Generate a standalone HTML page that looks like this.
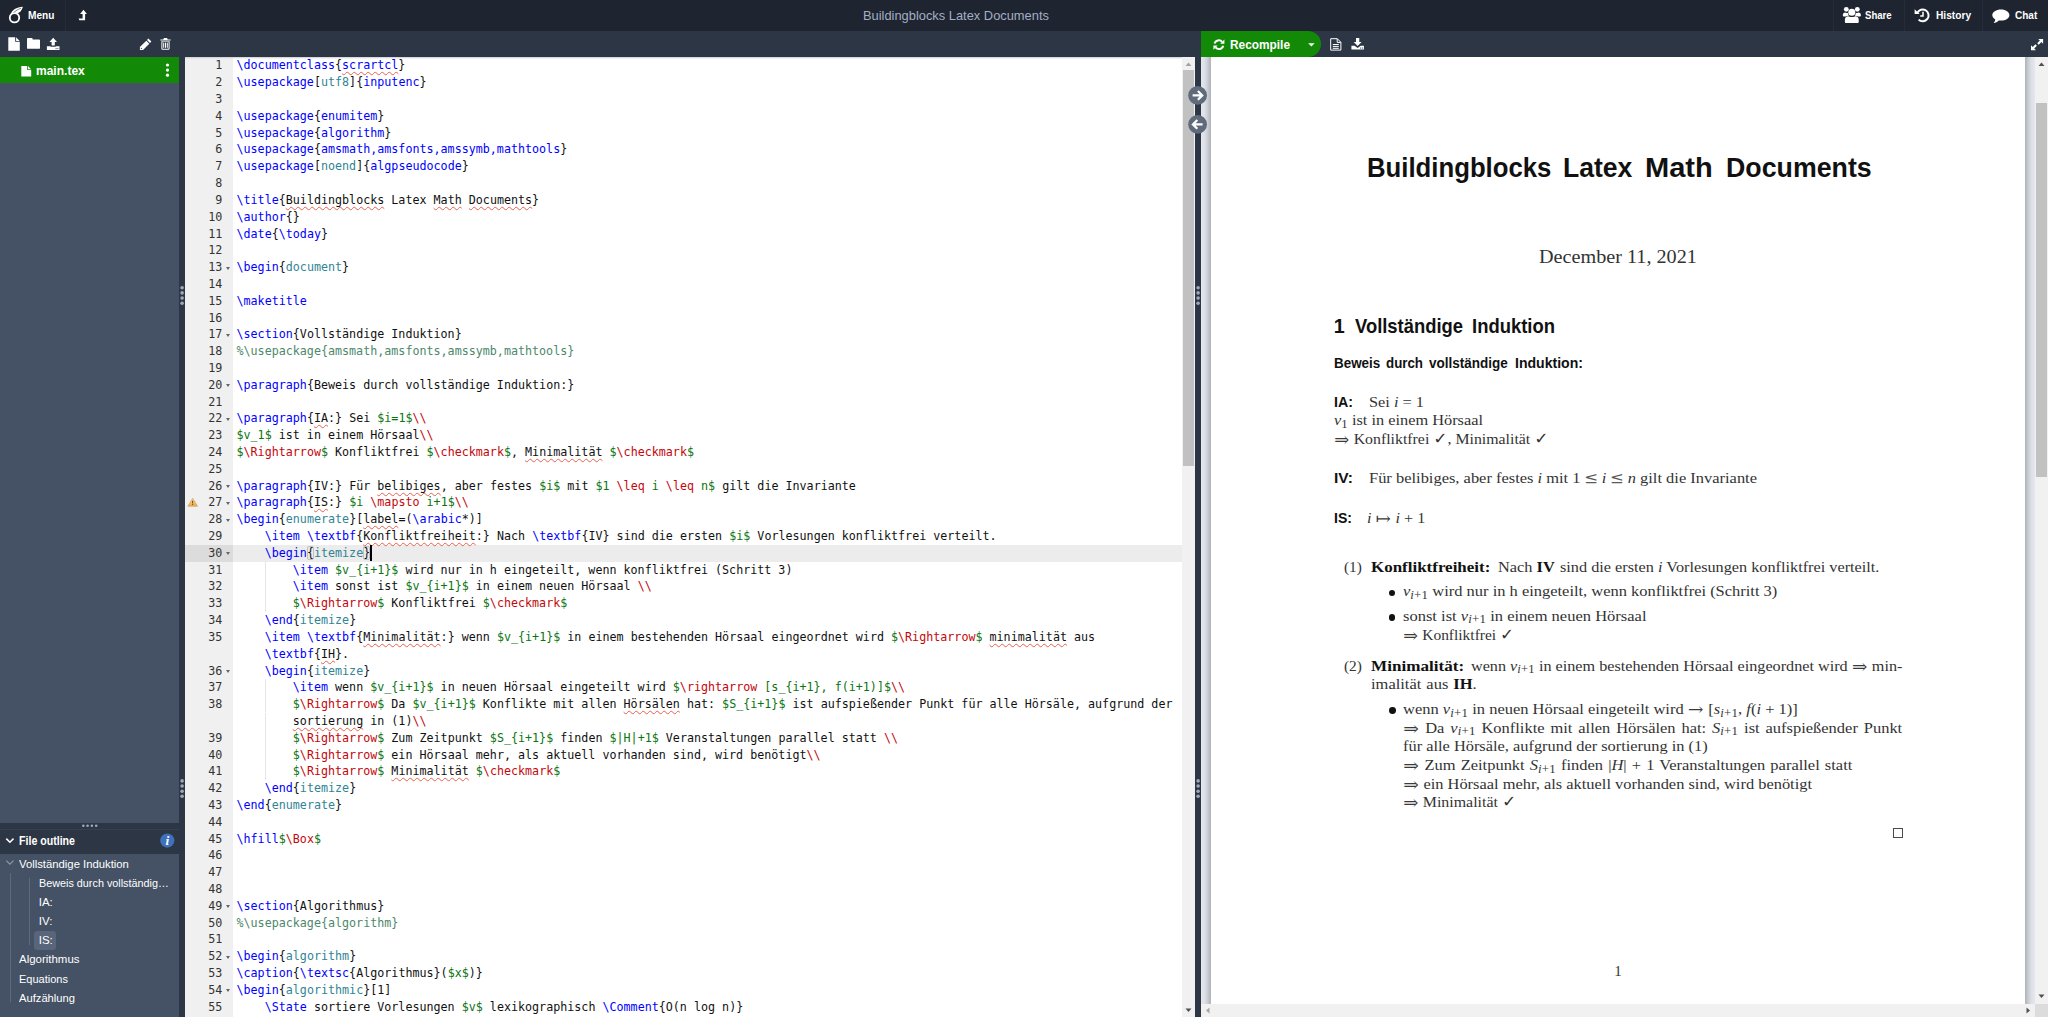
<!DOCTYPE html>
<html lang="de"><head><meta charset="utf-8"><title>Buildingblocks Latex Documents</title>
<style>
*{box-sizing:border-box;margin:0;padding:0}
html,body{width:2048px;height:1017px;overflow:hidden;background:#fff}
body{position:relative;font-family:"Liberation Sans",sans-serif;color:#fff;-webkit-font-smoothing:antialiased}
.abs{position:absolute}
#topbar{left:0;top:0;width:2048px;height:31px;background:#1e2530}
#tb2{left:0;top:31px;width:2048px;height:26px;background:#2c3645}
#side{left:0;top:57px;width:179px;height:960px;background:#455265}
#vsplit1{left:179px;top:57px;width:6px;height:960px;background:#2c3645}
#vsplit2{left:1195px;top:57px;width:6px;height:960px;background:#2c3645}
#filerow{left:0;top:57px;width:179px;height:26px;background:#138a07}
.tl{position:absolute;white-space:nowrap;line-height:20px;height:20px;transform-origin:0 0}
.tl span{line-height:0}
.div1{position:absolute;top:0;width:1px;height:31px;background:#262d3a}
/* editor */
#editor{left:185px;top:57px;width:997px;height:960px;background:#fff;overflow:hidden}
#gutter{left:0;top:0;width:48px;height:960px;background:#f0f0f0}
.ln{position:absolute;left:0;width:37.4px;text-align:right;color:#333;height:16.8px;line-height:16.8px}
#editor,.cl{font-family:"DejaVu Sans Mono","Liberation Mono",monospace;font-size:11.69px}
.cl{position:absolute;left:51.5px;white-space:pre;height:16.8px;line-height:16.8px;color:#111}
.k{color:#0000ff}.p{color:#111}.v{color:#318495}.c{color:#4c886b}.s{color:#0a7410}.e{color:#c5060b}.t{color:#111}
.sp,.ksp{text-decoration:underline wavy #e8604c;text-decoration-thickness:0.6px;text-underline-offset:1.6px;text-decoration-skip-ink:none}
.ksp{color:#0000ff}
.pb{outline:1px solid #c0c0c0;outline-offset:-1px;border-radius:2px}
.fold{position:absolute;left:40.7px;width:0;height:0;border-left:2.7px solid transparent;border-right:2.7px solid transparent;border-top:3.1px solid #666}
.ig{position:absolute;width:1px;background:#e6e6e6}
/* scrollbars */
.sbtrack{background:#f1f1f1}
.sbthumb{background:#c1c1c1}
/* pdf */
#pdfbg{left:1201px;top:57px;width:834px;height:947px;background:#e4e8ee}
#page{left:1211px;top:57px;width:814px;height:947px;background:#fff}
.pl{position:absolute;white-space:nowrap;transform-origin:0 0;color:#333;font-family:"Liberation Serif",serif;font-size:14.97px;line-height:24px;height:24px}
.pl span{line-height:0}
.sf{font-family:"Liberation Sans",sans-serif;font-weight:bold;color:#111}
.b{font-weight:bold;color:#111}
.i{font-style:italic}
.sub{font-size:0.78em;position:relative;top:0.2em;letter-spacing:0.2px}
.m{font-family:"DejaVu Math TeX Gyre","DejaVu Sans",sans-serif;color:#3a3a3a}
.le{color:#5a5a5a}
.ck{font-family:"DejaVu Sans","DejaVu Math TeX Gyre",sans-serif;font-size:1.08em;color:#333}
</style></head><body>
<div id="topbar" class="abs"></div>
<div id="tb2" class="abs"></div>
<div id="side" class="abs"></div>
<div id="filerow" class="abs"></div>
<div id="vsplit1" class="abs"></div>
<div id="editor" class="abs">
<div id="gutter" class="abs"></div>
<div class="abs" style="left:0;top:488.1px;width:48px;height:16.808px;background:#dcdcdc"></div>
<div class="abs" style="left:48px;top:488.1px;width:949px;height:16.808px;background:#ececec"></div>
<div class="abs" style="left:0;top:0;width:997px;height:2px;background:linear-gradient(#c9cdd4,rgba(201,205,212,0))"></div>
<div class="ln" style="top:0.4px">1</div>
<div class="cl" style="top:0.4px"><span class="k">\documentclass</span><span class="p">{</span><span class="ksp">scrartcl</span><span class="p">}</span></div>
<div class="ln" style="top:17.2px">2</div>
<div class="cl" style="top:17.2px"><span class="k">\usepackage</span><span class="p">[</span><span class="v">utf8</span><span class="p">]</span><span class="p">{</span><span class="k">inputenc</span><span class="p">}</span></div>
<div class="ln" style="top:34.0px">3</div>
<div class="ln" style="top:50.8px">4</div>
<div class="cl" style="top:50.8px"><span class="k">\usepackage</span><span class="p">{</span><span class="k">enumitem</span><span class="p">}</span></div>
<div class="ln" style="top:67.6px">5</div>
<div class="cl" style="top:67.6px"><span class="k">\usepackage</span><span class="p">{</span><span class="k">algorithm</span><span class="p">}</span></div>
<div class="ln" style="top:84.4px">6</div>
<div class="cl" style="top:84.4px"><span class="k">\usepackage</span><span class="p">{</span><span class="k">amsmath,amsfonts,amssymb,mathtools</span><span class="p">}</span></div>
<div class="ln" style="top:101.2px">7</div>
<div class="cl" style="top:101.2px"><span class="k">\usepackage</span><span class="p">[</span><span class="v">noend</span><span class="p">]</span><span class="p">{</span><span class="k">algpseudocode</span><span class="p">}</span></div>
<div class="ln" style="top:118.1px">8</div>
<div class="ln" style="top:134.9px">9</div>
<div class="cl" style="top:134.9px"><span class="k">\title</span><span class="p">{</span><span class="sp">Buildingblocks</span> Latex <span class="sp">Math</span> <span class="sp">Documents</span><span class="p">}</span></div>
<div class="ln" style="top:151.7px">10</div>
<div class="cl" style="top:151.7px"><span class="k">\author</span><span class="p">{}</span></div>
<div class="ln" style="top:168.5px">11</div>
<div class="cl" style="top:168.5px"><span class="k">\date</span><span class="p">{</span><span class="k">\today</span><span class="p">}</span></div>
<div class="ln" style="top:185.3px">12</div>
<div class="ln" style="top:202.1px">13</div>
<div class="fold" style="top:209.6px"></div>
<div class="cl" style="top:202.1px"><span class="k">\begin</span><span class="p">{</span><span class="v">document</span><span class="p">}</span></div>
<div class="ln" style="top:218.9px">14</div>
<div class="ln" style="top:235.7px">15</div>
<div class="cl" style="top:235.7px"><span class="k">\maketitle</span></div>
<div class="ln" style="top:252.5px">16</div>
<div class="ln" style="top:269.3px">17</div>
<div class="fold" style="top:276.8px"></div>
<div class="cl" style="top:269.3px"><span class="k">\section</span><span class="p">{</span>Vollständige Induktion<span class="p">}</span></div>
<div class="ln" style="top:286.1px">18</div>
<div class="cl" style="top:286.1px"><span class="c">%\usepackage{amsmath,amsfonts,amssymb,mathtools}</span></div>
<div class="ln" style="top:302.9px">19</div>
<div class="ln" style="top:319.8px">20</div>
<div class="fold" style="top:327.3px"></div>
<div class="cl" style="top:319.8px"><span class="k">\paragraph</span><span class="p">{</span>Beweis durch vollständige Induktion:<span class="p">}</span></div>
<div class="ln" style="top:336.6px">21</div>
<div class="ln" style="top:353.4px">22</div>
<div class="fold" style="top:360.9px"></div>
<div class="cl" style="top:353.4px"><span class="k">\paragraph</span><span class="p">{</span><span class="sp">IA</span>:<span class="p">}</span> Sei <span class="s">$i=1$</span><span class="e">\\</span></div>
<div class="ln" style="top:370.2px">23</div>
<div class="cl" style="top:370.2px"><span class="s">$v_1$</span> ist in einem Hörsaal<span class="e">\\</span></div>
<div class="ln" style="top:387.0px">24</div>
<div class="cl" style="top:387.0px"><span class="s">$</span><span class="e">\Rightarrow</span><span class="s">$</span> Konfliktfrei <span class="s">$</span><span class="e">\checkmark</span><span class="s">$</span>, <span class="sp">Minimalität</span> <span class="s">$</span><span class="e">\checkmark</span><span class="s">$</span></div>
<div class="ln" style="top:403.8px">25</div>
<div class="ln" style="top:420.6px">26</div>
<div class="fold" style="top:428.1px"></div>
<div class="cl" style="top:420.6px"><span class="k">\paragraph</span><span class="p">{</span>IV:<span class="p">}</span> Für <span class="sp">belibiges</span>, aber festes <span class="s">$i$</span> mit <span class="s">$1 </span><span class="e">\leq</span><span class="s"> i </span><span class="e">\leq</span><span class="s"> n$</span> gilt die Invariante</div>
<div class="ln" style="top:437.4px">27</div>
<div class="fold" style="top:444.9px"></div>
<div class="cl" style="top:437.4px"><span class="k">\paragraph</span><span class="p">{</span><span class="sp">IS</span>:<span class="p">}</span> <span class="s">$i </span><span class="e">\mapsto</span><span class="s"> i+1$</span><span class="e">\\</span></div>
<div class="ln" style="top:454.2px">28</div>
<div class="fold" style="top:461.7px"></div>
<div class="cl" style="top:454.2px"><span class="k">\begin</span><span class="p">{</span><span class="v">enumerate</span><span class="p">}</span><span class="p">[</span><span class="sp">label</span>=(<span class="k">\arabic</span>*)<span class="p">]</span></div>
<div class="ln" style="top:471.0px">29</div>
<div class="cl" style="top:471.0px">    <span class="k">\item</span> <span class="k">\textbf</span><span class="p">{</span><span class="sp">Konfliktfreiheit</span>:<span class="p">}</span> Nach <span class="k">\textbf</span><span class="p">{</span>IV<span class="p">}</span> sind die ersten <span class="s">$i$</span> Vorlesungen konfliktfrei verteilt.</div>
<div class="ln" style="top:487.8px">30</div>
<div class="fold" style="top:495.3px"></div>
<div class="cl" style="top:487.8px">    <span class="k">\begin</span><span class="pb">{</span><span class="v">itemize</span><span class="pb">}</span></div>
<div class="ig" style="left:79.5px;top:504.2px;height:16.808px"></div>
<div class="ln" style="top:504.6px">31</div>
<div class="cl" style="top:504.6px">        <span class="k">\item</span> <span class="s">$v_{i+1}$</span> wird nur in h eingeteilt, wenn konfliktfrei (Schritt 3)</div>
<div class="ig" style="left:79.5px;top:521.0px;height:16.808px"></div>
<div class="ln" style="top:521.4px">32</div>
<div class="cl" style="top:521.4px">        <span class="k">\item</span> sonst ist <span class="s">$v_{i+1}$</span> in einem neuen Hörsaal <span class="e">\\</span></div>
<div class="ig" style="left:79.5px;top:537.9px;height:16.808px"></div>
<div class="ln" style="top:538.3px">33</div>
<div class="cl" style="top:538.3px">        <span class="s">$</span><span class="e">\Rightarrow</span><span class="s">$</span> Konfliktfrei <span class="s">$</span><span class="e">\checkmark</span><span class="s">$</span></div>
<div class="ln" style="top:555.1px">34</div>
<div class="cl" style="top:555.1px">    <span class="k">\end</span><span class="p">{</span><span class="v">itemize</span><span class="p">}</span></div>
<div class="ln" style="top:571.9px">35</div>
<div class="cl" style="top:571.9px">    <span class="k">\item</span> <span class="k">\textbf</span><span class="p">{</span><span class="sp">Minimalität</span>:<span class="p">}</span> wenn <span class="s">$v_{i+1}$</span> in einem bestehenden Hörsaal eingeordnet wird <span class="s">$</span><span class="e">\Rightarrow</span><span class="s">$</span> <span class="sp">minimalität</span> aus</div>
<div class="cl" style="top:588.7px">    <span class="k">\textbf</span><span class="p">{</span><span class="sp">IH</span><span class="p">}</span>.</div>
<div class="ln" style="top:605.5px">36</div>
<div class="fold" style="top:613.0px"></div>
<div class="cl" style="top:605.5px">    <span class="k">\begin</span><span class="p">{</span><span class="v">itemize</span><span class="p">}</span></div>
<div class="ig" style="left:79.5px;top:621.9px;height:16.808px"></div>
<div class="ln" style="top:622.3px">37</div>
<div class="cl" style="top:622.3px">        <span class="k">\item</span> wenn <span class="s">$v_{i+1}$</span> in neuen Hörsaal eingeteilt wird <span class="s">$</span><span class="e">\rightarrow</span><span class="s"> [s_{i+1}, f(i+1)]$</span><span class="e">\\</span></div>
<div class="ig" style="left:79.5px;top:638.7px;height:16.808px"></div>
<div class="ln" style="top:639.1px">38</div>
<div class="cl" style="top:639.1px">        <span class="s">$</span><span class="e">\Rightarrow</span><span class="s">$</span> Da <span class="s">$v_{i+1}$</span> Konflikte mit allen <span class="sp">Hörsälen</span> hat: <span class="s">$S_{i+1}$</span> ist aufspießender Punkt für alle Hörsäle, aufgrund der</div>
<div class="ig" style="left:79.5px;top:655.5px;height:16.808px"></div>
<div class="cl" style="top:655.9px">        <span class="sp">sortierung</span> in (1)<span class="e">\\</span></div>
<div class="ig" style="left:79.5px;top:672.3px;height:16.808px"></div>
<div class="ln" style="top:672.7px">39</div>
<div class="cl" style="top:672.7px">        <span class="s">$</span><span class="e">\Rightarrow</span><span class="s">$</span> Zum Zeitpunkt <span class="s">$S_{i+1}$</span> finden <span class="s">$|H|+1$</span> Veranstaltungen parallel statt <span class="e">\\</span></div>
<div class="ig" style="left:79.5px;top:689.1px;height:16.808px"></div>
<div class="ln" style="top:689.5px">40</div>
<div class="cl" style="top:689.5px">        <span class="s">$</span><span class="e">\Rightarrow</span><span class="s">$</span> ein Hörsaal mehr, als aktuell vorhanden sind, wird benötigt<span class="e">\\</span></div>
<div class="ig" style="left:79.5px;top:705.9px;height:16.808px"></div>
<div class="ln" style="top:706.3px">41</div>
<div class="cl" style="top:706.3px">        <span class="s">$</span><span class="e">\Rightarrow</span><span class="s">$</span> <span class="sp">Minimalität</span> <span class="s">$</span><span class="e">\checkmark</span><span class="s">$</span></div>
<div class="ln" style="top:723.1px">42</div>
<div class="cl" style="top:723.1px">    <span class="k">\end</span><span class="p">{</span><span class="v">itemize</span><span class="p">}</span></div>
<div class="ln" style="top:740.0px">43</div>
<div class="cl" style="top:740.0px"><span class="k">\end</span><span class="p">{</span><span class="v">enumerate</span><span class="p">}</span></div>
<div class="ln" style="top:756.8px">44</div>
<div class="ln" style="top:773.6px">45</div>
<div class="cl" style="top:773.6px"><span class="k">\hfill</span><span class="s">$</span><span class="e">\Box</span><span class="s">$</span></div>
<div class="ln" style="top:790.4px">46</div>
<div class="ln" style="top:807.2px">47</div>
<div class="ln" style="top:824.0px">48</div>
<div class="ln" style="top:840.8px">49</div>
<div class="fold" style="top:848.3px"></div>
<div class="cl" style="top:840.8px"><span class="k">\section</span><span class="p">{</span>Algorithmus<span class="p">}</span></div>
<div class="ln" style="top:857.6px">50</div>
<div class="cl" style="top:857.6px"><span class="c">%\usepackage{algorithm}</span></div>
<div class="ln" style="top:874.4px">51</div>
<div class="ln" style="top:891.2px">52</div>
<div class="fold" style="top:898.7px"></div>
<div class="cl" style="top:891.2px"><span class="k">\begin</span><span class="p">{</span><span class="v">algorithm</span><span class="p">}</span></div>
<div class="ln" style="top:908.0px">53</div>
<div class="cl" style="top:908.0px"><span class="k">\caption</span><span class="p">{</span><span class="k">\textsc</span><span class="p">{</span>Algorithmus<span class="p">}</span>(<span class="s">$x$</span>)<span class="p">}</span></div>
<div class="ln" style="top:924.8px">54</div>
<div class="fold" style="top:932.3px"></div>
<div class="cl" style="top:924.8px"><span class="k">\begin</span><span class="p">{</span><span class="v">algorithmic</span><span class="p">}</span><span class="p">[</span>1<span class="p">]</span></div>
<div class="ln" style="top:941.6px">55</div>
<div class="cl" style="top:941.6px">    <span class="k">\State</span> sortiere Vorlesungen <span class="s">$v$</span> lexikographisch <span class="k">\Comment</span><span class="p">{</span>O(n log n)<span class="p">}</span></div>
</div>
<div id="vsplit2" class="abs"></div>
<div id="pdfbg" class="abs"></div>
<div id="page" class="abs"></div>
<div class="div1" style="left:65px"></div>
<div class="div1" style="left:1833px"></div>
<div class="div1" style="left:1903.5px"></div>
<div class="div1" style="left:1982px"></div>
<div class="abs" style="left:1201px;top:31px;width:120px;height:26px;background:#138a07;border-radius:0 13px 13px 0"></div>
<div class="abs sbtrack" style="left:1182px;top:57px;width:13px;height:960px"></div>
<div class="abs sbthumb" style="left:1183px;top:70px;width:11px;height:396px"></div>
<div class="abs" style="left:1201px;top:57px;width:10px;height:947px;background:linear-gradient(90deg,#e4e8ee 0%,#dde1e7 35%,#cbcfd5 65%,#b4b8bf 90%,#b2b6bd 100%)"></div>
<div class="abs" style="left:2025px;top:57px;width:10px;height:947px;background:linear-gradient(90deg,#b2b6bd 0%,#b4b8bf 10%,#cbcfd5 35%,#dde1e7 65%,#e4e8ee 100%)"></div>
<div class="abs sbtrack" style="left:2035px;top:57px;width:13px;height:947px"></div>
<div class="abs sbthumb" style="left:2036px;top:103px;width:11px;height:374px"></div>
<div class="abs sbtrack" style="left:1201px;top:1004px;width:847px;height:13px"></div>
<div class="abs" style="left:2035px;top:1004px;width:13px;height:13px;background:#dcdcdc"></div>
<div class="abs" style="left:0;top:823px;width:179px;height:6px;background:#2c3645"></div>
<div class="abs" style="left:0;top:829px;width:179px;height:24.5px;background:#2c3645;border-top:1px solid #364050"></div>
<div class="abs" style="left:33.5px;top:930.5px;width:22px;height:19.5px;background:#58657a;border-radius:3px"></div>
<div class="abs" style="left:10px;top:873px;width:1px;height:129px;background:#5d6a7d"></div>
<div class="abs" style="left:29px;top:878px;width:1px;height:67px;background:#5d6a7d"></div>
<div class="abs" style="left:370px;top:544.5px;width:2px;height:16.5px;background:#000"></div>
<div class="abs" style="left:1892.7px;top:828px;width:10.4px;height:10.4px;border:1px solid #4a4a4a"></div>
<svg class="abs" style="left:0;top:0;pointer-events:none" width="2048" height="1017" viewBox="0 0 2048 1017"><circle cx="14.5" cy="17.7" r="4.7" fill="none" stroke="#fff" stroke-width="1.8"/><path fill="#fff" d="M10.6 14.8 C11.6 10 16.6 7 22.9 6.7 C22 10.6 19.6 12.9 16.6 13.5 L15.4 12.6 C14 12.7 12.4 13.4 10.6 14.8 Z"/><path d="M13.6 12.6 C15.8 10.6 18.4 9.2 21 8.2" fill="none" stroke="#1e2530" stroke-width="0.55"/><path fill="#fff" d="M83.5 9.7 L86.9 14.1 H85.1 V20.3 H79.4 L78.6 18.6 H82.6 V14.1 H80.1 Z"/><path fill="#fff" d="M8.3 37.2 H15.2 V41.8 H19.8 V50.7 H8.3 Z M16.1 37.3 L19.7 40.9 H16.1 Z"/><path fill="#fff" d="M27.8 38 H31.8 Q32.6 38 32.6 38.8 V39.6 H39.1 Q40 39.6 40 40.5 V47.9 Q40 48.8 39.1 48.8 H27.9 Q27 48.8 27 47.9 V38.8 Q27 38 27.8 38 Z"/><path fill="#fff" d="M53.2 37.8 L57 41.9 H54.8 V45.6 H51.6 V41.9 H49.4 Z M46.9 46.3 H50.6 V46.7 H55.8 V46.3 H59.5 V50 H46.9 Z"/><rect x="55.6" y="48.2" width="1" height="0.9" fill="#2c3645"/><rect x="57.4" y="48.2" width="1" height="0.9" fill="#2c3645"/><path fill="#fff" d="M148.4 38.6 L151.4 41.6 L150 43 L147 40 Z M146.3 40.7 L149.3 43.7 L143 50 H139.9 V46.9 Z"/><path fill="#2c3645" d="M140.9 47.5 L142.3 48.9 H140.9 Z"/><path fill="#fff" d="M163.9 38 H167.1 L167.7 39.4 H170.6 V40.6 H160.4 V39.4 H163.3 Z M161.4 41.2 H169.6 V48.5 Q169.6 49.75 168.4 49.75 H162.6 Q161.4 49.75 161.4 48.5 Z"/><g fill="#2c3645"><rect x="162.4" y="41.8" width="6.2" height="6.9" rx="0.3"/></g><g fill="#fff"><rect x="163.2" y="42.6" width="1" height="5.2"/><rect x="165" y="42.6" width="1" height="5.2"/><rect x="166.8" y="42.6" width="1" height="5.2"/></g><path fill="#fff" d="M21.3 66 H27.2 V69.9 H31.2 V76.6 H21.3 Z M28 66.1 L31.1 69.2 H28 Z"/><circle cx="167.5" cy="65.0" r="1.6" fill="#fff"/><circle cx="167.5" cy="70.1" r="1.6" fill="#fff"/><circle cx="167.5" cy="75.2" r="1.6" fill="#fff"/><circle cx="182.1" cy="287.8" r="1.8" fill="#9da7b7"/><circle cx="182.1" cy="292.9" r="1.8" fill="#9da7b7"/><circle cx="182.1" cy="298.1" r="1.8" fill="#9da7b7"/><circle cx="182.1" cy="303.2" r="1.8" fill="#9da7b7"/><circle cx="182.1" cy="780.9" r="1.8" fill="#9da7b7"/><circle cx="182.1" cy="786.0" r="1.8" fill="#9da7b7"/><circle cx="182.1" cy="791.2" r="1.8" fill="#9da7b7"/><circle cx="182.1" cy="796.3" r="1.8" fill="#9da7b7"/><circle cx="1198.1" cy="287.8" r="1.8" fill="#9da7b7"/><circle cx="1198.1" cy="292.9" r="1.8" fill="#9da7b7"/><circle cx="1198.1" cy="298.1" r="1.8" fill="#9da7b7"/><circle cx="1198.1" cy="303.2" r="1.8" fill="#9da7b7"/><circle cx="1198.1" cy="780.9" r="1.8" fill="#9da7b7"/><circle cx="1198.1" cy="786.0" r="1.8" fill="#9da7b7"/><circle cx="1198.1" cy="791.2" r="1.8" fill="#9da7b7"/><circle cx="1198.1" cy="796.3" r="1.8" fill="#9da7b7"/><circle cx="83.3" cy="825.7" r="1.3" fill="#9da7b7"/><circle cx="87.6" cy="825.7" r="1.3" fill="#9da7b7"/><circle cx="91.9" cy="825.7" r="1.3" fill="#9da7b7"/><circle cx="96.2" cy="825.7" r="1.3" fill="#9da7b7"/><g fill="none" stroke="#fff" stroke-width="2"><path d="M1214.6 43.6 A4.3 4.3 0 0 1 1222.2 42"/><path d="M1223.2 45.8 A4.3 4.3 0 0 1 1215.6 47.4"/></g><path fill="#fff" d="M1224.4 39.6 V43.8 H1220.2 Z M1213.4 49.8 V45.6 H1217.6 Z"/><path fill="#fff" d="M1308.2 43.2 H1314.6 L1311.4 46.6 Z"/><path fill="none" stroke="#fff" stroke-width="1" d="M1330.7 38.7 H1337.3 L1340.9 42.3 V50.1 H1330.7 Z M1337.2 38.8 V42.4 H1340.8"/><g fill="#fff"><rect x="1332.8" y="44" width="6" height="1"/><rect x="1332.8" y="45.9" width="6" height="1"/><rect x="1332.8" y="47.8" width="6" height="1"/></g><path fill="#fff" d="M1356 38.1 H1359.3 V41.9 H1361.6 L1357.65 46.1 L1353.7 41.9 H1356 Z M1351.4 45.7 H1354.6 L1357.65 48 L1360.7 45.7 H1363.9 V49.4 H1351.4 Z"/><rect x="1360.1" y="47.6" width="1" height="0.9" fill="#2c3645"/><rect x="1361.9" y="47.6" width="1" height="0.9" fill="#2c3645"/><g fill="#fff"><circle cx="1851.8" cy="12.3" r="3.5"/><path d="M1845.7 22.9 Q1844.9 22.9 1844.9 22 V19.6 Q1844.9 16.4 1848.4 16.2 Q1851.8 18 1855.2 16.2 Q1858.7 16.4 1858.7 19.6 V22 Q1858.7 22.9 1857.9 22.9 Z"/><circle cx="1846.3" cy="9.3" r="2.4"/><circle cx="1857.3" cy="9.3" r="2.4"/><path d="M1842.8 15.6 Q1842.8 12.4 1845.3 12.4 Q1847 13.4 1847.9 13 Q1848 14.6 1848.9 15.7 Q1846.6 15.8 1845.6 16.6 H1843.8 Q1842.8 16.6 1842.8 15.6 Z"/><path d="M1860.9 15.6 Q1860.9 12.4 1858.4 12.4 Q1856.7 13.4 1855.8 13 Q1855.7 14.6 1854.8 15.7 Q1857.1 15.8 1858.1 16.6 H1859.9 Q1860.9 16.6 1860.9 15.6 Z"/></g><path fill="none" stroke="#fff" stroke-width="2" d="M1917.3 12.9 A5.9 5.9 0 1 1 1918.6 19.6"/><path fill="#fff" d="M1914.6 9.2 L1919.6 13.9 H1914.6 Z"/><path fill="none" stroke="#fff" stroke-width="1.5" d="M1923 11.8 V16 H1920.2"/><path fill="#fff" d="M2001 9.4 C2005.8 9.4 2009.4 11.9 2009.4 15 C2009.4 18.1 2005.8 20.6 2001 20.6 C2000.2 20.6 1999.5 20.5 1998.8 20.4 C1997.4 21.8 1995.6 22.6 1993.6 22.9 C1994.6 21.8 1995.2 20.6 1995.3 19.4 C1993.4 18.3 1992.3 16.8 1992.3 15 C1992.3 11.9 1996.2 9.4 2001 9.4 Z"/><g fill="#fff"><path d="M2038.2 38.9 H2043.1 V43.8 L2041.4 42.1 L2038.7 44.8 L2037.2 43.3 L2039.9 40.6 Z"/><path d="M2035.9 50.2 H2031 V45.3 L2032.7 47 L2035.4 44.3 L2036.9 45.8 L2034.2 48.5 Z"/></g><circle cx="167.3" cy="840.6" r="7.1" fill="#3e70bb"/><text x="167.4" y="845.3" font-family="Liberation Serif, serif" font-style="italic" font-weight="bold" font-size="13.5" fill="#fff" text-anchor="middle">i</text><path fill="none" stroke="#fff" stroke-width="1.5" d="M6.3 838.6 L9.9 842.2 L13.5 838.6"/><path fill="none" stroke="#8b96a8" stroke-width="1.2" d="M6.3 860.6 L9.9 864.2 L13.5 860.6"/><circle cx="1197.6" cy="95.4" r="9.4" fill="#5f6a7b"/><path fill="none" stroke="#fff" stroke-width="2.2" d="M1192.6 95.4 H1201.6 M1197.8999999999999 91.0 L1202.3 95.4 L1197.8999999999999 99.80000000000001"/><circle cx="1197.6" cy="124.4" r="9.4" fill="#5f6a7b"/><path fill="none" stroke="#fff" stroke-width="2.2" d="M1202.6 124.4 H1193.6 M1197.3 120.0 L1192.8999999999999 124.4 L1197.3 128.8"/><path fill="#a3a3a3" d="M1185.5 66 L1188.5 62.4 L1191.5 66 Z"/><path fill="#505050" d="M1185.5 1008.5 L1191.5 1008.5 L1188.5 1012 Z"/><path fill="#505050" d="M2038.5 66 L2041.5 62.4 L2044.5 66 Z"/><path fill="#505050" d="M2038.5 994.5 L2044.5 994.5 L2041.5 998 Z"/><path fill="#a3a3a3" d="M1209.5 1007.5 L1206 1010.5 L1209.5 1013.5 Z"/><path fill="#505050" d="M2026.5 1007.5 L2030 1010.5 L2026.5 1013.5 Z"/><defs><linearGradient id="wg" x1="0" y1="0" x2="0" y2="1"><stop offset="0" stop-color="#f7e88a"/><stop offset="0.55" stop-color="#fbc15c"/><stop offset="1" stop-color="#f9a040"/></linearGradient></defs><path fill="url(#wg)" stroke="#caa268" stroke-width="0.7" stroke-linejoin="round" d="M192.7 498.2 L197.5 506.2 H187.9 Z"/><rect x="192.25" y="500.7" width="0.9" height="2.8" fill="#4a3a1a"/><rect x="192.25" y="504.1" width="0.9" height="0.9" fill="#4a3a1a"/></svg>
<div id="menu" class="tl" style="left:27.70px;top:4.90px;font-size:11.0px;font-weight:bold;color:#fff;transform:scaleX(0.9188)">Menu</div>
<div id="title" class="tl" style="left:863.30px;top:6.30px;font-size:13.3px;font-weight:normal;color:#a4afc4;transform:scaleX(0.9674)">Buildingblocks Latex Documents</div>
<div id="share" class="tl" style="left:1865.30px;top:5.20px;font-size:11.0px;font-weight:bold;color:#fff;transform:scaleX(0.8732)">Share</div>
<div id="hist" class="tl" style="left:1935.60px;top:5.20px;font-size:11.0px;font-weight:bold;color:#fff;transform:scaleX(0.9260)">History</div>
<div id="chat" class="tl" style="left:2014.70px;top:5.20px;font-size:11.0px;font-weight:bold;color:#fff;transform:scaleX(0.9119)">Chat</div>
<div id="main" class="tl" style="left:36.25px;top:61.00px;font-size:13.0px;font-weight:bold;color:#fff;transform:scaleX(0.9242)">main.tex</div>
<div id="recomp" class="tl" style="left:1230.10px;top:34.75px;font-size:12.5px;font-weight:bold;color:#fff;transform:scaleX(0.9491)">Recompile</div>
<div id="fo" class="tl" style="left:19.30px;top:830.60px;font-size:12.0px;font-weight:bold;color:#fff;transform:scaleX(0.8841)">File outline</div>
<div id="o1" class="tl" style="left:19.30px;top:853.60px;font-size:11.5px;font-weight:normal;color:#fff;transform:scaleX(0.9822)">Vollständige Induktion</div>
<div id="o2" class="tl" style="left:38.70px;top:872.90px;font-size:11.5px;font-weight:normal;color:#fff;transform:scaleX(0.9400)">Beweis durch vollständig…</div>
<div id="o3" class="tl" style="left:38.70px;top:891.60px;font-size:11.5px;font-weight:normal;color:#fff;transform:scaleX(1.0000)">IA:</div>
<div id="o4" class="tl" style="left:38.70px;top:911.00px;font-size:11.5px;font-weight:normal;color:#fff;transform:scaleX(1.0000)">IV:</div>
<div id="o5" class="tl" style="left:38.70px;top:930.30px;font-size:11.5px;font-weight:normal;color:#fff;transform:scaleX(1.0000)">IS:</div>
<div id="o6" class="tl" style="left:19.30px;top:949.20px;font-size:11.5px;font-weight:normal;color:#fff;transform:scaleX(0.9964)">Algorithmus</div>
<div id="o7" class="tl" style="left:19.30px;top:968.60px;font-size:11.5px;font-weight:normal;color:#fff;transform:scaleX(0.9559)">Equations</div>
<div id="o8" class="tl" style="left:19.30px;top:987.70px;font-size:11.5px;font-weight:normal;color:#fff;transform:scaleX(0.9731)">Aufzählung</div>
<div id="p_t1" class="pl sf" style="left:1367.20px;top:154.90px;font-size:28.4px;transform:scaleX(0.9062)">Buildingblocks</div>
<div id="p_t2" class="pl sf" style="left:1563.40px;top:154.90px;font-size:28.4px;transform:scaleX(0.9357)">Latex</div>
<div id="p_t3" class="pl sf" style="left:1644.70px;top:154.90px;font-size:28.4px;transform:scaleX(1.0234)">Math</div>
<div id="p_t4" class="pl sf" style="left:1725.60px;top:154.90px;font-size:28.4px;transform:scaleX(0.9424)">Documents</div>
<div id="p_date" class="pl " style="left:1539.00px;top:243.80px;font-size:19.7px;transform:scaleX(1.0254)">December 11, 2021</div>
<div id="p_secn" class="pl sf" style="left:1333.75px;top:314.25px;font-size:19.7px;transform:scaleX(1.0000)">1</div>
<div id="p_sec1" class="pl sf" style="left:1355.00px;top:314.25px;font-size:19.7px;transform:scaleX(0.9343)">Vollständige</div>
<div id="p_sec2" class="pl sf" style="left:1472.00px;top:314.25px;font-size:19.7px;transform:scaleX(0.9370)">Induktion</div>
<div id="p_par1" class="pl sf" style="left:1333.75px;top:350.50px;font-size:14.97px;transform:scaleX(0.8964)">Beweis</div>
<div id="p_par2" class="pl sf" style="left:1385.50px;top:350.50px;font-size:14.97px;transform:scaleX(0.8896)">durch</div>
<div id="p_par3" class="pl sf" style="left:1429.25px;top:350.50px;font-size:14.97px;transform:scaleX(0.9016)">vollständige</div>
<div id="p_par4" class="pl sf" style="left:1515.00px;top:350.50px;font-size:14.97px;transform:scaleX(0.9400)">Induktion:</div>
<div id="p_ia" class="pl sf" style="left:1333.50px;top:389.75px;font-size:14.97px;transform:scaleX(0.9515)">IA:</div>
<div id="p_ia2" class="pl " style="left:1368.75px;top:389.75px;font-size:14.97px;transform:scaleX(1.0898)">Sei <span class="i">i</span> = 1</div>
<div id="p_v1" class="pl " style="left:1333.50px;top:408.30px;font-size:14.97px;transform:scaleX(1.0910)"><span class="i">v</span><span class="sub">1</span> ist in einem Hörsaal</div>
<div id="p_kf" class="pl " style="left:1333.50px;top:426.90px;font-size:14.97px;transform:scaleX(1.0575)"><span class="m">⇒</span> Konfliktfrei <span class="ck">✓</span>, Minimalität <span class="ck">✓</span></div>
<div id="p_iv" class="pl sf" style="left:1333.50px;top:466.25px;font-size:14.97px;transform:scaleX(1.0375)">IV:</div>
<div id="p_iv2" class="pl " style="left:1368.75px;top:466.25px;font-size:14.97px;transform:scaleX(1.0989)">Für belibiges, aber festes <span class="i">i</span> mit 1 <span class="m le">≤</span> <span class="i">i</span> <span class="m le">≤</span> <span class="i">n</span> gilt die Invariante</div>
<div id="p_is" class="pl sf" style="left:1333.50px;top:505.50px;font-size:14.97px;transform:scaleX(0.9404)">IS:</div>
<div id="p_is2" class="pl " style="left:1366.75px;top:505.50px;font-size:14.97px;transform:scaleX(1.0762)"><span class="i">i</span> <span class="m">↦</span> <span class="i">i</span> + 1</div>
<div id="p_n1" class="pl " style="left:1344.40px;top:555.30px;font-size:14.97px;transform:scaleX(1.0247)">(1)</div>
<div id="p_e1a" class="pl b" style="left:1370.90px;top:555.30px;font-size:14.97px;transform:scaleX(1.1327)">Konfliktfreiheit:</div>
<div id="p_e1b" class="pl " style="left:1497.50px;top:555.30px;font-size:14.97px;transform:scaleX(1.0910)">Nach <span class="b">IV</span></div>
<div id="p_e1c" class="pl " style="left:1560.00px;top:555.30px;font-size:14.97px;transform:scaleX(1.0856)">sind die ersten <span class="i">i</span> Vorlesungen konfliktfrei verteilt.</div>
<div id="p_b1" class="pl " style="left:1403.40px;top:579.40px;font-size:14.97px;transform:scaleX(1.0992)"><span class="i">v</span><span class="sub"><span class="i">i</span>+1</span> wird nur in h eingeteilt, wenn konfliktfrei (Schritt 3)</div>
<div id="p_b2" class="pl " style="left:1403.40px;top:604.10px;font-size:14.97px;transform:scaleX(1.1027)">sonst ist <span class="i">v</span><span class="sub"><span class="i">i</span>+1</span> in einem neuen Hörsaal</div>
<div id="p_b2b" class="pl " style="left:1403.40px;top:622.80px;font-size:14.97px;transform:scaleX(1.0336)"><span class="m">⇒</span> Konfliktfrei <span class="ck">✓</span></div>
<div id="p_n2" class="pl " style="left:1344.40px;top:654.10px;font-size:14.97px;transform:scaleX(1.0247)">(2)</div>
<div id="p_e2a" class="pl b" style="left:1370.90px;top:654.10px;font-size:14.97px;transform:scaleX(1.1426)">Minimalität:</div>
<div id="p_e2b" class="pl " style="left:1471.40px;top:654.10px;font-size:14.97px;transform:scaleX(1.0812)">wenn <span class="i">v</span><span class="sub"><span class="i">i</span>+1</span> in einem bestehenden Hörsaal eingeordnet wird <span class="m">⇒</span> min-</div>
<div id="p_e2c" class="pl " style="left:1370.90px;top:672.40px;font-size:14.97px;transform:scaleX(1.1000);word-spacing:0.850px">imalität aus <span class="b">IH</span>.</div>
<div id="p_c1" class="pl " style="left:1403.40px;top:697.20px;font-size:14.97px;transform:scaleX(1.1012)">wenn <span class="i">v</span><span class="sub"><span class="i">i</span>+1</span> in neuen Hörsaal eingeteilt wird <span class="m">→</span> [<span class="i">s</span><span class="sub"><span class="i">i</span>+1</span>, <span class="i">f</span>(<span class="i">i</span> + 1)]</div>
<div id="p_c2" class="pl " style="left:1403.40px;top:716.00px;font-size:14.97px;transform:scaleX(1.1000);word-spacing:1.610px"><span class="m">⇒</span> Da <span class="i">v</span><span class="sub"><span class="i">i</span>+1</span> Konflikte mit allen Hörsälen hat: <span class="i">S</span><span class="sub"><span class="i">i</span>+1</span> ist aufspießender Punkt</div>
<div id="p_c3" class="pl " style="left:1403.40px;top:734.40px;font-size:14.97px;transform:scaleX(1.0937)">für alle Hörsäle, aufgrund der sortierung in (1)</div>
<div id="p_c4" class="pl " style="left:1403.40px;top:753.20px;font-size:14.97px;transform:scaleX(1.1000);word-spacing:0.897px"><span class="m">⇒</span> Zum Zeitpunkt <span class="i">S</span><span class="sub"><span class="i">i</span>+1</span> finden |<span class="i">H</span>| + 1 Veranstaltungen parallel statt</div>
<div id="p_c5" class="pl " style="left:1403.40px;top:771.90px;font-size:14.97px;transform:scaleX(1.0965)"><span class="m">⇒</span> ein Hörsaal mehr, als aktuell vorhanden sind, wird benötigt</div>
<div id="p_c6" class="pl " style="left:1403.40px;top:790.20px;font-size:14.97px;transform:scaleX(1.0631)"><span class="m">⇒</span> Minimalität <span class="ck">✓</span></div>
<div id="p_pn" class="pl " style="left:1614.20px;top:959.30px;font-size:14.97px;transform:scaleX(1.0000)">1</div>
<div class="abs" style="left:1388.6px;top:589.6px;width:6.8px;height:6.8px;border-radius:50%;background:#111"></div>
<div class="abs" style="left:1388.6px;top:614.2px;width:6.8px;height:6.8px;border-radius:50%;background:#111"></div>
<div class="abs" style="left:1388.8px;top:707.1px;width:6.8px;height:6.8px;border-radius:50%;background:#111"></div>


</body></html>
